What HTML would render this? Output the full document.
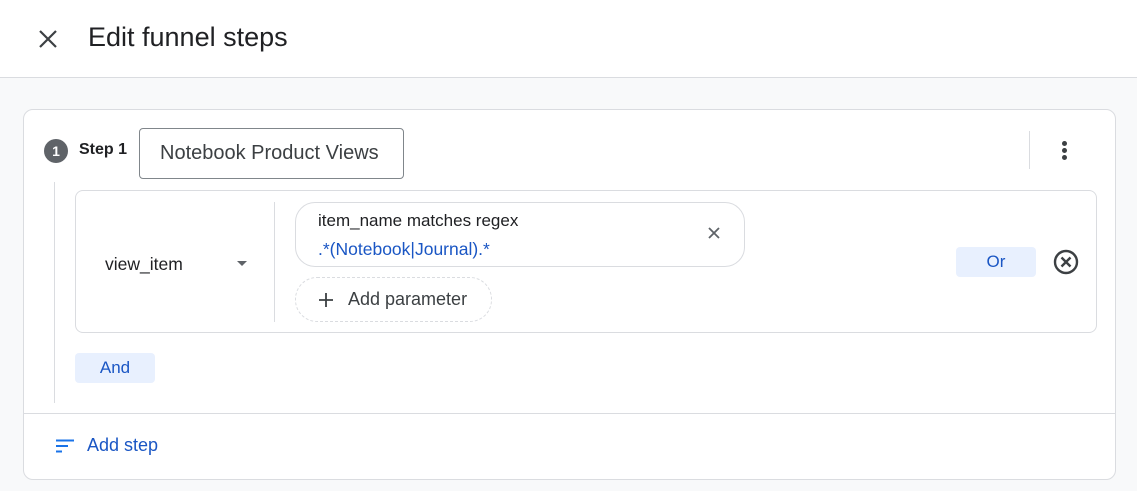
<!DOCTYPE html>
<html><head><meta charset="utf-8"><style>
*{box-sizing:border-box;margin:0;padding:0}
body{width:1137px;height:491px;overflow:hidden;background:#f8f9fa;font-family:"Liberation Sans",Arial,sans-serif;position:relative;color:#202124}
.hdr{position:absolute;left:0;top:0;width:1137px;height:78px;background:#fff;border-bottom:1px solid #dadce0}
.abs{position:absolute}
.card{position:absolute;left:23px;top:109px;width:1093px;height:371px;background:#fff;border:1px solid #dadce0;border-radius:10px}
</style></head><body>
<div class="hdr">
<svg class="abs" style="left:37px;top:28px" width="22" height="22" viewBox="0 0 22 22"><path d="M3 3L19 19M19 3L3 19" stroke="#3c4043" stroke-width="2.2"/></svg>
<div class="abs" style="left:88px;top:22px;font-size:27px;color:#202124">Edit funnel steps</div>
</div>
<div class="card">
<div class="abs" style="left:20px;top:29px;width:24px;height:24px;border-radius:50%;background:#5f6368;color:#fff;font-size:14px;font-weight:bold;text-align:center;line-height:24px">1</div>
<div class="abs" style="left:55px;top:31px;font-size:16px;font-weight:bold;color:#202124">Step 1</div>
<div class="abs" style="left:115px;top:18px;width:265px;height:51px;border:1px solid #80868b;border-radius:4px;font-size:20px;color:#3c4043;padding-left:20px;line-height:49px">Notebook Product Views</div>
<div class="abs" style="left:1005px;top:21px;width:1px;height:38px;background:#dadce0"></div>
<div class="abs" style="left:1038px;top:31px;width:5px;height:5px;border-radius:50%;background:#3c4043;box-shadow:0 7px 0 #3c4043,0 14px 0 #3c4043"></div>
<div class="abs" style="left:30px;top:72px;width:1px;height:221px;background:#dadce0"></div>
<div class="abs" style="left:51px;top:80px;width:1022px;height:143px;border:1px solid #dadce0;border-radius:8px">
<div class="abs" style="left:29px;top:63px;font-size:17.5px;color:#202124">view_item</div>
<div class="abs" style="left:161px;top:70px;width:0;height:0;border-left:5px solid transparent;border-right:5px solid transparent;border-top:5px solid #5f6368"></div>
<div class="abs" style="left:198px;top:11px;width:1px;height:120px;background:#dadce0"></div>
<div class="abs" style="left:219px;top:11px;width:450px;height:65px;border:1px solid #dadce0;border-radius:20px">
<div class="abs" style="left:22px;top:8px;font-size:17px;color:#202124">item_name matches regex</div>
<div class="abs" style="left:22px;top:36px;font-size:17.5px;color:#1a56c4">.*(Notebook|Journal).*</div>
<svg class="abs" style="left:411px;top:23px" width="14" height="14" viewBox="0 0 14 14"><path d="M2 2L12 12M12 2L2 12" stroke="#5f6368" stroke-width="1.8"/></svg>
</div>
<div class="abs" style="left:219px;top:86px;width:197px;height:45px;border:1px dashed #dadce0;border-radius:22px">
<svg class="abs" style="left:22px;top:14px" width="16" height="16" viewBox="0 0 16 16"><path d="M8 1V15M1 8H15" stroke="#3c4043" stroke-width="1.8"/></svg>
<div class="abs" style="left:52px;top:11px;font-size:18px;color:#3c4043">Add parameter</div>
</div>
<div class="abs" style="left:880px;top:56px;width:80px;height:30px;background:#e8f0fe;border-radius:4px;color:#1a56c4;font-size:17px;text-align:center;line-height:30px">Or</div>
<svg class="abs" style="left:976px;top:57px" width="28" height="28" viewBox="0 0 28 28"><circle cx="14" cy="14" r="11" fill="none" stroke="#3c4043" stroke-width="2.4"/><path d="M9.5 9.5L18.5 18.5M18.5 9.5L9.5 18.5" stroke="#3c4043" stroke-width="2.4"/></svg>
</div>
<div class="abs" style="left:51px;top:243px;width:80px;height:30px;background:#e8f0fe;border-radius:4px;color:#1a56c4;font-size:17px;text-align:center;line-height:30px">And</div>
<div class="abs" style="left:0;top:303px;width:1091px;height:1px;background:#dadce0"></div>
<svg class="abs" style="left:32px;top:329px" width="18" height="14" viewBox="0 0 18 14"><path d="M0 1.5H18M0 7H12M0 12.5H6" stroke="#1a73e8" stroke-width="2"/></svg>
<div class="abs" style="left:63px;top:325px;font-size:18px;color:#1a56c4">Add step</div>
</div>
</body></html>
